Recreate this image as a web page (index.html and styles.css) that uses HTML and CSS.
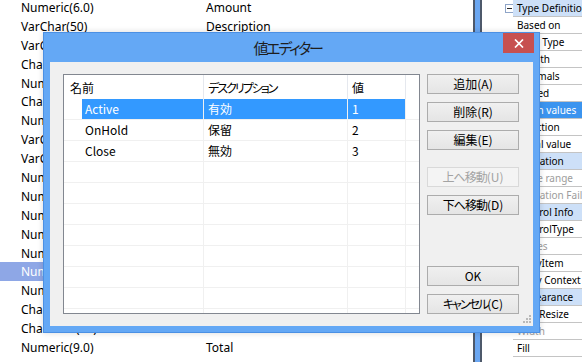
FILE: index.html
```html
<!DOCTYPE html>
<html lang="ja">
<head>
    <meta charset="UTF-8">
    <title>値エディター</title>
    <link rel="stylesheet" href="styles.css">
</head>
<body>
    <div class="app">
        <!-- field list behind the dialog -->
        <div class="types">
            <div class="type-row"><span class="t-kind">Numeric(6.0)</span><span class="t-name">Amount</span></div>
            <div class="type-row"><span class="t-kind">VarChar(50)</span><span class="t-name">Description</span></div>
            <div class="type-row"><span class="t-kind">VarChar(20)</span><span class="t-name">Name</span></div>
            <div class="type-row"><span class="t-kind">Character(1)</span><span class="t-name">Status</span></div>
            <div class="type-row"><span class="t-kind">Numeric(4.0)</span><span class="t-name">Year</span></div>
            <div class="type-row"><span class="t-kind">Character(2)</span><span class="t-name">Code</span></div>
            <div class="type-row"><span class="t-kind">Numeric(2.0)</span><span class="t-name">Month</span></div>
            <div class="type-row"><span class="t-kind">VarChar(100)</span><span class="t-name">Address</span></div>
            <div class="type-row"><span class="t-kind">VarChar(30)</span><span class="t-name">City</span></div>
            <div class="type-row"><span class="t-kind">Numeric(8.0)</span><span class="t-name">Date</span></div>
            <div class="type-row"><span class="t-kind">Numeric(5.0)</span><span class="t-name">Quantity</span></div>
            <div class="type-row"><span class="t-kind">Numeric(7.2)</span><span class="t-name">Price</span></div>
            <div class="type-row"><span class="t-kind">Numeric(3.0)</span><span class="t-name">Rate</span></div>
            <div class="type-row"><span class="t-kind">Numeric(9.2)</span><span class="t-name">Tax</span></div>
            <div class="type-row current"><span class="t-kind">Numeric(1.0)</span><span class="t-name">State</span></div>
            <div class="type-row"><span class="t-kind">Numeric(6.0)</span><span class="t-name">Count</span></div>
            <div class="type-row"><span class="t-kind">Character(10)</span><span class="t-name">Phone</span></div>
            <div class="type-row"><span class="t-kind">Character(20)</span><span class="t-name">Unit</span></div>
            <div class="type-row"><span class="t-kind">Numeric(9.0)</span><span class="t-name">Total</span></div>
        </div>

        <div class="splitter"></div>

        <!-- property grid -->
        <div class="props">
            <div class="prop-row">
                <div class="gutter">
                    <svg width="9" height="9" viewBox="0 0 9 9"><rect x="0.5" y="0.5" width="8" height="8" fill="#fff" stroke="#8fa5c8"/><line x1="2" y1="4.5" x2="7" y2="4.5" stroke="#2a2a2a"/></svg>
                </div>
                <div class="cell category">Type Definition</div>
            </div>
            <div class="prop-row"><div class="gutter"></div><div class="cell">Based on</div></div>
            <div class="prop-row"><div class="gutter"></div><div class="cell">Base Type</div></div>
            <div class="prop-row"><div class="gutter"></div><div class="cell">Length</div></div>
            <div class="prop-row"><div class="gutter"></div><div class="cell">Decimals</div></div>
            <div class="prop-row"><div class="gutter"></div><div class="cell">Signed</div></div>
            <div class="prop-row"><div class="gutter"></div><div class="cell selected">Given values</div></div>
            <div class="prop-row"><div class="gutter"></div><div class="cell">Direction</div></div>
            <div class="prop-row"><div class="gutter"></div><div class="cell">Initial value</div></div>
            <div class="prop-row"><div class="gutter"></div><div class="cell category">Validation</div></div>
            <div class="prop-row"><div class="gutter"></div><div class="cell muted">Value range</div></div>
            <div class="prop-row"><div class="gutter"></div><div class="cell muted">Validation Failure</div></div>
            <div class="prop-row"><div class="gutter"></div><div class="cell category">Control Info</div></div>
            <div class="prop-row"><div class="gutter"></div><div class="cell">ControlType</div></div>
            <div class="prop-row"><div class="gutter"></div><div class="cell muted">Values</div></div>
            <div class="prop-row"><div class="gutter"></div><div class="cell">EntryItem</div></div>
            <div class="prop-row"><div class="gutter"></div><div class="cell">Entry Context</div></div>
            <div class="prop-row"><div class="gutter"></div><div class="cell category">Appearance</div></div>
            <div class="prop-row"><div class="gutter"></div><div class="cell">AutoResize</div></div>
            <div class="prop-row"><div class="gutter"></div><div class="cell muted">Width</div></div>
            <div class="prop-row"><div class="gutter"></div><div class="cell">Fill</div></div>
        </div>

        <!-- value editor dialog -->
        <div class="dialog">
            <div class="titlebar">
                <span class="title">値エディター</span>
                <span class="close">
                    <svg width="10" height="9" viewBox="0 0 10 9"><path d="M1 0.5 L9 8.5 M9 0.5 L1 8.5" stroke="#fff" stroke-width="1.7" fill="none"/></svg>
                </span>
            </div>
            <div class="client">
                <div class="listview">
                    <div class="lv-header">
                        <div class="lv-cell">名前</div>
                        <div class="lv-cell"><span class="kana">デスクリプション</span></div>
                        <div class="lv-cell">値</div>
                        <div class="lv-cell"></div>
                    </div>
                    <div class="lv-row selected">
                        <div class="lv-cell first"><span class="lv-text">Active</span></div>
                        <div class="lv-cell">有効</div>
                        <div class="lv-cell">1</div>
                        <div class="lv-cell"></div>
                    </div>
                    <div class="lv-row">
                        <div class="lv-cell first"><span class="lv-text">OnHold</span></div>
                        <div class="lv-cell">保留</div>
                        <div class="lv-cell">2</div>
                        <div class="lv-cell"></div>
                    </div>
                    <div class="lv-row">
                        <div class="lv-cell first"><span class="lv-text">Close</span></div>
                        <div class="lv-cell">無効</div>
                        <div class="lv-cell">3</div>
                        <div class="lv-cell"></div>
                    </div>
                    <div class="lv-row"><div class="lv-cell"></div><div class="lv-cell"></div><div class="lv-cell"></div><div class="lv-cell"></div></div>
                    <div class="lv-row"><div class="lv-cell"></div><div class="lv-cell"></div><div class="lv-cell"></div><div class="lv-cell"></div></div>
                    <div class="lv-row"><div class="lv-cell"></div><div class="lv-cell"></div><div class="lv-cell"></div><div class="lv-cell"></div></div>
                    <div class="lv-row"><div class="lv-cell"></div><div class="lv-cell"></div><div class="lv-cell"></div><div class="lv-cell"></div></div>
                    <div class="lv-row"><div class="lv-cell"></div><div class="lv-cell"></div><div class="lv-cell"></div><div class="lv-cell"></div></div>
                    <div class="lv-row"><div class="lv-cell"></div><div class="lv-cell"></div><div class="lv-cell"></div><div class="lv-cell"></div></div>
                    <div class="lv-row"><div class="lv-cell"></div><div class="lv-cell"></div><div class="lv-cell"></div><div class="lv-cell"></div></div>
                    <div class="lv-row"><div class="lv-cell"></div><div class="lv-cell"></div><div class="lv-cell"></div><div class="lv-cell"></div></div>
                </div>

                <div class="buttons">
                    <button class="btn">追加(A)</button>
                    <button class="btn">削除(R)</button>
                    <button class="btn">編集(E)</button>
                    <button class="btn move-up" disabled><span class="tight">上へ移動</span>(U)</button>
                    <button class="btn"><span class="tight">下へ移動</span>(D)</button>
                    <button class="btn ok">OK</button>
                    <button class="btn"><span class="kana">キャンセル</span>(C)</button>
                </div>

                <div class="grip">
                    <svg width="8" height="8" viewBox="0 0 8 8" fill="#b9b9b9">
                        <rect x="6" y="0" width="2" height="2"/>
                        <rect x="3" y="3" width="2" height="2"/>
                        <rect x="6" y="3" width="2" height="2"/>
                        <rect x="0" y="6" width="2" height="2"/>
                        <rect x="3" y="6" width="2" height="2"/>
                        <rect x="6" y="6" width="2" height="2"/>
                    </svg>
                </div>
            </div>
        </div>
    </div>
</body>
</html>
```

FILE: styles.css
```css
* {
    box-sizing: border-box;
    margin: 0;
    padding: 0;
}

body {
    width: 582px;
    height: 362px;
    overflow: hidden;
    background-color: #fff;
    font-family: "Noto Sans", sans-serif;
    color: #000;
}

.app {
    position: relative;
    display: flex;
    height: 362px;
}

/* field list */

.types {
    width: 473px;
    flex: none;
    margin-top: -2px;
}

.type-row {
    display: flex;
    height: 18.9px;
    line-height: 19px;
    font-size: 12px;
    padding-left: 18px;
    white-space: nowrap;
}

.type-row .t-kind {
    width: 188px;
    padding-left: 3px;
}

.type-row.current {
    background-color: #8ea7e6;
    color: #fff;
}

.splitter {
    width: 9px;
    flex: none;
    background-color: #6ba7f2;
    border-left: 2px solid #4e596b;
    border-right: 2px solid #4e596b;
}

/* property grid */

.props {
    flex: 1;
    overflow: hidden;
    font-size: 10px;
}

.prop-row {
    display: flex;
    height: 17px;
}

.prop-row .gutter {
    width: 31px;
    flex: none;
    display: flex;
    align-items: center;
    justify-content: flex-end;
}

.prop-row .gutter svg {
    display: block;
    margin-right: -1px;
}

.prop-row .cell {
    flex: 1;
    height: 17px;
    line-height: 16px;
    padding-left: 4px;
    border-bottom: 1px solid #c4c4c4;
    white-space: nowrap;
}

.cell.category {
    background-color: #cde0f8;
}

.cell.selected {
    background-color: #3b94ef;
    color: #fff;
}

.cell.muted {
    color: #9c9c9c;
}

/* dialog */

.dialog {
    position: absolute;
    left: 43px;
    top: 32px;
    width: 497px;
    height: 301px;
    display: flex;
    flex-direction: column;
    padding: 0 6px 6px;
    background-color: #64a8f5;
    border: 1px solid #4b90e4;
    box-shadow: 0 0 6px rgba(0, 0, 0, 0.15);
    font-family: "Noto Sans CJK JP", sans-serif;
    font-feature-settings: "palt";
}

.titlebar {
    display: flex;
    height: 29px;
    margin: 0 -6px;
}

.titlebar .title {
    flex: 1;
    padding-left: 28px;
    text-align: center;
    font-size: 15px;
    line-height: 30px;
    letter-spacing: -2.3px;
    color: #1e1e1e;
}

.titlebar .close {
    width: 31px;
    height: 20px;
    margin-right: 5px;
    display: flex;
    align-items: center;
    justify-content: center;
    background-color: #c75050;
}

.client {
    position: relative;
    flex: 1;
    display: flex;
    gap: 7px;
    padding: 12px 14px 0 13px;
    background-color: #f0f0f0;
}

.listview {
    width: 357px;
    height: 240px;
    flex: none;
    overflow: hidden;
    background-color: #fff;
    border: 1px solid #828790;
    font-size: 12px;
}

.lv-header,
.lv-row {
    display: grid;
    grid-template-columns: 140px 144px 58px 1fr;
}

.lv-header {
    height: 24px;
    line-height: 25px;
}

.lv-header .lv-cell {
    padding-left: 4px;
    border-right: 1px solid #e5e8ee;
}

.lv-header .lv-cell:first-child {
    padding-left: 6px;
}

.lv-header .lv-cell:last-child {
    border-right: none;
}

.lv-row {
    height: 21px;
    line-height: 20px;
    border-bottom: 1px solid #f0f0f0;
}

.lv-row .lv-cell {
    padding-left: 4px;
    border-right: 1px solid #f0f0f0;
}

.lv-row .lv-cell:last-child {
    border-right: none;
}

.lv-row .lv-cell.first {
    padding-left: 18px;
}

.lv-text {
    display: block;
    padding-left: 3px;
}

.lv-row.selected .lv-cell:nth-child(2),
.lv-row.selected .lv-cell:nth-child(3),
.lv-row.selected .lv-text {
    background-color: #3399ff;
    color: #fff;
}

.kana {
    letter-spacing: -2px;
}

.tight {
    letter-spacing: -1px;
}

.buttons {
    width: 92px;
    display: flex;
    flex-direction: column;
    gap: 8px;
}

.btn {
    height: 20px;
    font-family: inherit;
    font-feature-settings: "palt";
    font-size: 12px;
    line-height: 18px;
    color: #000;
    background: linear-gradient(#f0f0f0, #e5e5e5);
    border: 1px solid #acacac;
}

.btn.move-up {
    margin-top: 9px;
}

.btn:disabled {
    color: #a3a3a3;
    background: #f4f4f4;
    border-color: #d9d9d9;
}

.btn.ok {
    margin-top: 43px;
}

.grip {
    position: absolute;
    right: 2px;
    bottom: 3px;
    line-height: 0;
}
```
